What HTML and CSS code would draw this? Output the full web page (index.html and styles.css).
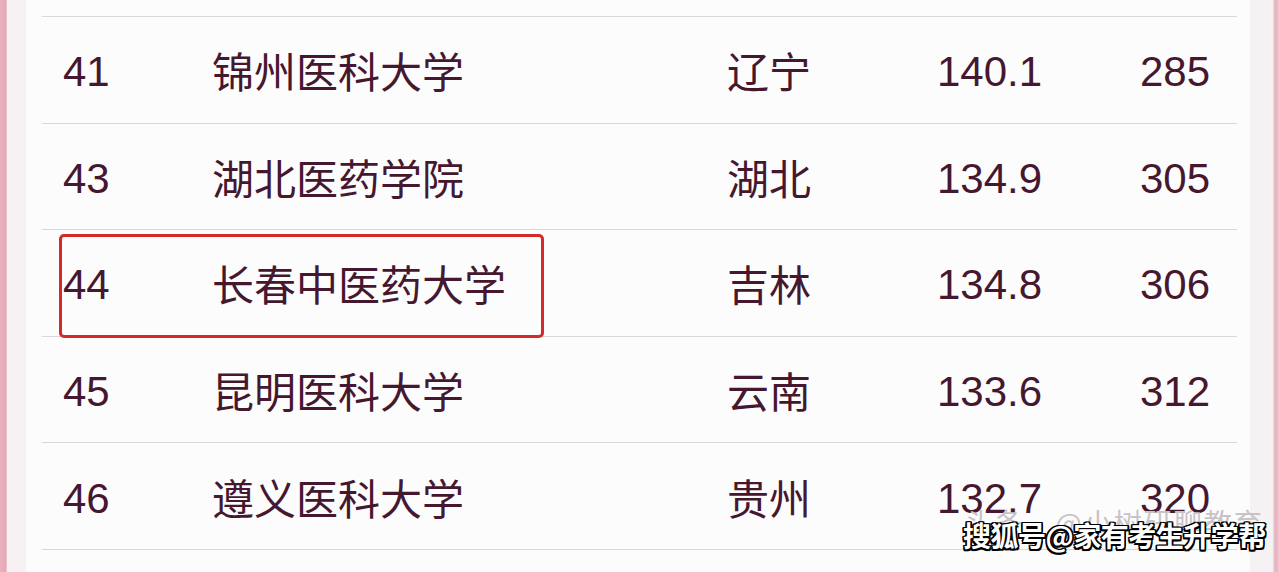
FILE: index.html
```html
<!DOCTYPE html>
<html lang="zh">
<head>
<meta charset="utf-8">
<link rel="stylesheet" href="styles.css">
</head>
<body>
<div class="frame">
  <div class="edge-strip"></div>
  <div class="edge-band"></div>
  <main class="sheet">
    <div class="top-gap"></div>
    <div class="row"><span class="num">41</span><span class="cn">锦州医科大学</span><span class="cn">辽宁</span><span class="num">140.1</span><span class="num">285</span></div>
    <div class="row"><span class="num">43</span><span class="cn">湖北医药学院</span><span class="cn">湖北</span><span class="num">134.9</span><span class="num">305</span></div>
    <div class="row row-mark"><span class="num">44</span><span class="cn">长春中医药大学</span><span class="cn">吉林</span><span class="num">134.8</span><span class="num">306</span><div class="mark-box"></div></div>
    <div class="row"><span class="num">45</span><span class="cn">昆明医科大学</span><span class="cn">云南</span><span class="num">133.6</span><span class="num">312</span></div>
    <div class="row"><span class="num">46</span><span class="cn">遵义医科大学</span><span class="cn">贵州</span><span class="num">132.7</span><span class="num">320</span></div>
    <div class="row row-last"></div>
  </main>
  <div class="edge-band edge-band-right"></div>
  <div class="edge-strip edge-strip-right"></div>
</div>
<div class="wm-faint">头条 <span class="wm-faint-at">@小树研聊教育</span></div>
<div class="wm">搜狐号@家有考生升学帮</div>
</body>
</html>
```

FILE: styles.css
```css
html, body {
  margin: 0;
  padding: 0;
  width: 1280px;
  height: 572px;
  overflow: hidden;
  background: #fdfbfd;
}

.frame {
  display: flex;
  width: 1280px;
  height: 572px;
}

.edge-strip {
  width: 7px;
  flex: none;
  background: linear-gradient(to right, #eab1c0, #e6a8b8 80%, #efd2d9);
}

.edge-strip-right {
  width: 7px;
  background: linear-gradient(to right, #f2d6dd, #e9aebd 40%, #f3cfd8);
}

.edge-band {
  width: 19px;
  flex: none;
  background: #f6f2f3;
}

.edge-band-right {
  width: 23px;
}

.sheet {
  flex: 1;
  background: #fdfcfd;
  padding: 0 13px 0 16px;
  display: flex;
  flex-direction: column;
}

.top-gap {
  height: 16px;
  flex: none;
}

.row {
  position: relative;
  flex: none;
  height: 106.6px;
  box-sizing: border-box;
  border-top: 1.5px solid #dcd6da;
  display: grid;
  grid-template-columns: 149px 515px 210px 203px 1fr;
  align-items: center;
  padding: 5px 0 0 21px;
  color: #45182f;
}

.row-last {
  height: 30px;
}

.num {
  font-family: "Liberation Sans", Arial, sans-serif;
  font-size: 42px;
  line-height: 1;
}

.cn {
  font-family: "Noto Sans CJK SC", "Noto Sans", sans-serif;
  font-size: 42px;
  line-height: 1;
  margin-top: -4px;
}

.mark-box {
  position: absolute;
  z-index: 1;
  left: 17px;
  top: 4px;
  width: 485px;
  height: 104px;
  box-sizing: border-box;
  border: 3px solid #d42a2a;
  border-radius: 5px;
}

.wm-faint {
  position: absolute;
  left: 965px;
  top: 502px;
  font-family: "Noto Sans CJK SC", sans-serif;
  font-size: 28px;
  color: #c8c3c6;
  letter-spacing: 2px;
  white-space: nowrap;
}

.wm-faint-at {
  margin-left: 22px;
}

.wm {
  position: absolute;
  z-index: 2;
  left: 963px;
  top: 515px;
  font-family: "Noto Sans CJK SC", sans-serif;
  font-size: 28px;
  font-weight: 700;
  color: #ffffff;
  white-space: nowrap;
  letter-spacing: -0.5px;
  text-shadow:
    -1.5px -1.5px 0 #000, 1.5px -1.5px 0 #000,
    -1.5px 1.5px 0 #000, 1.5px 1.5px 0 #000,
    0 -1.5px 0 #000, 0 1.5px 0 #000,
    -1.5px 0 0 #000, 1.5px 0 0 #000;
}
```
